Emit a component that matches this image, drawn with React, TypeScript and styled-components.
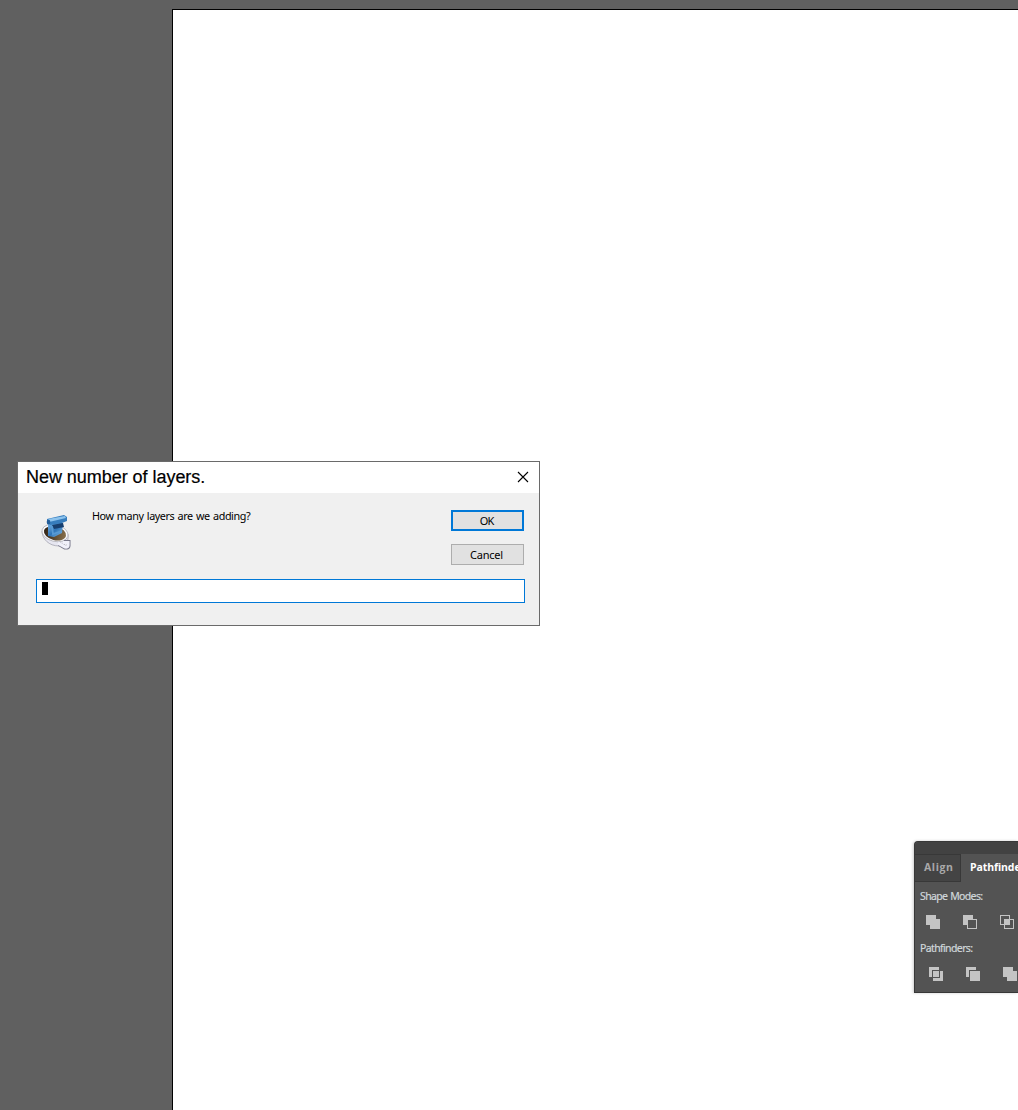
import React from "react";
import styled, { createGlobalStyle } from "styled-components";

const GlobalStyle = createGlobalStyle`
  body { margin: 0; overflow: hidden; background: #606060; }
  * { box-sizing: border-box; }
`;

const Workspace = styled.main`
  position: relative;
  display: flex;
  width: 100vw;
  height: 100vh;
  padding: 9px 0 0 172px;
  overflow: hidden;
  background: #606060;
`;

const Artboard = styled.section`
  flex: 1;
  border: solid #000;
  border-width: 1px 0 0 1px;
  background: #fff;
`;

const Dialog = styled.section`
  position: absolute;
  left: 17px;
  top: 461px;
  width: 523px;
  height: 165px;
  display: flex;
  flex-direction: column;
  border: 1px solid #6a6a6a;
  background: #f0f0f0;
  color: #000;
  font-family: "Noto Sans", sans-serif;
`;

const TitleBar = styled.header`
  display: flex;
  align-items: flex-start;
  justify-content: space-between;
  height: 31px;
  padding: 0 10px 0 8px;
  background: #fff;
`;

const Title = styled.h1`
  margin: 0;
  font: 400 18px/31px "Liberation Sans", sans-serif;
  letter-spacing: -0.04px;
  white-space: nowrap;
  -webkit-text-stroke: 0.2px #000;
`;

const CloseButton = styled.button`
  display: flex;
  margin-top: 9px;
  padding: 0;
  border: 0;
  background: none;
`;

const DialogBody = styled.div`
  display: flex;
  height: 86px;
  padding: 17px 15px 0 22px;
`;

const IconSlot = styled.div`
  width: 52px;
  padding-top: 4px;
`;

const Message = styled.p`
  flex: 1;
  margin: -2px 0 0;
  font-size: 10.8px;
  line-height: 15px;
  letter-spacing: -0.42px;
  word-spacing: 0.9px;
  white-space: nowrap;
`;

const Actions = styled.div`
  display: flex;
  flex-direction: column;
  gap: 13px;
`;

const DialogButton = styled.button<{ $primary?: boolean }>`
  display: flex;
  align-items: center;
  justify-content: center;
  width: 73px;
  height: 21px;
  padding: 0 2px 0 0;
  border: ${(p) => (p.$primary ? "2px solid #0078d7" : "1px solid #adadad")};
  background: #e1e1e1;
  color: #000;
  font: 400 11px/15px "Noto Sans", sans-serif;
  letter-spacing: ${(p) => (p.$primary ? "-0.9px" : "-0.2px")};
`;

const Field = styled.div`
  display: flex;
  width: 489px;
  height: 24px;
  margin-left: 18px;
  padding: 2px 5px;
  border: 1px solid #0078d7;
  background: #fff;
`;

const Selection = styled.span`
  width: 6px;
  height: 13px;
  background: #000;
`;

const Panel = styled.aside`
  position: absolute;
  left: 914px;
  top: 841px;
  width: 104px;
  height: 152px;
  overflow: hidden;
  display: flex;
  flex-direction: column;
  border: solid #383838;
  border-width: 1px 0 1px 1px;
  border-top-left-radius: 4px;
  background: #535353;
  box-shadow: -1px 0 3px rgba(0, 0, 0, 0.2);
  font-family: "Noto Sans", sans-serif;
`;

const PanelGrip = styled.div`
  height: 12px;
  border-top-left-radius: 3px;
  background: #424242;
`;

const Tabs = styled.div`
  display: flex;
  height: 28px;
`;

const Tab = styled.div<{ $active?: boolean }>`
  flex: none;
  width: ${(p) => (p.$active ? "80px" : "46px")};
  padding-left: 9px;
  border: solid #383838;
  border-width: ${(p) => (p.$active ? "0" : "1px 1px 1px 0")};
  padding-top: ${(p) => (p.$active ? "1px" : "0")};
  background: ${(p) => (p.$active ? "#535353" : "#444")};
  color: ${(p) => (p.$active ? "#fff" : "#a9a9a9")};
  font: 700 10.5px/24px "Open Sans", sans-serif;
  letter-spacing: ${(p) => (p.$active ? "-0.1px" : "0.6px")};
  white-space: nowrap;
`;

const Group = styled.section`
  height: 52px;
  padding: 7px 0 0 5px;
`;

const GroupLabel = styled.h2`
  margin: 0;
  color: #d0d7da;
  font-size: 10.5px;
  font-weight: 400;
  line-height: 15px;
  letter-spacing: -0.62px;
  word-spacing: 0.6px;
  -webkit-text-stroke: 0.2px #d0d7da;
`;

const Tools = styled.div<{ $inset: number }>`
  display: flex;
  gap: 23px;
  padding: 11px 0 0 ${(p) => p.$inset}px;
`;

const ToolIcon = styled.svg`
  flex: none;
  display: block;
  fill: #c4c4c4;
`;

const icons: Record<string, React.ReactNode> = {
  unite: <path d="M0 0h10v4h4v10H4v-4H0z" />,
  minusFront: <path fillRule="evenodd" d="M0 0h10v4H4v6H0zM4 4h10v10H4zM5 5v8h8V5z" />,
  intersect: <path fillRule="evenodd" d="M0 0h10v4h4v10H4v-4H0zM1 1v8h3V4h5V1zM10 5v5H5v3h8V5z" />,
  divide: <path fillRule="evenodd" d="M0 0h10v3H3v7H0zM4 4h6v6H4zM11 4h3v10H4v-3h7z" />,
  trim: <path d="M0 0h10v3H3v7H0zM4 4h10v10H4z" />,
  merge: <path d="M0 0h10v4h4v10H4v-4H0z" />,
};

const Pathfinder = ({ name }: { name: string }) => (
  <ToolIcon width="14" height="14" viewBox="0 0 14 14" shapeRendering="crispEdges">
    {icons[name]}
  </ToolIcon>
);

const ScriptIcon = () => (
  <svg width="34" height="36" viewBox="0 0 34 36">
    <defs>
      <linearGradient id="paper" x2="1" y2="1">
        <stop stopColor="#79b5e8" />
        <stop offset=".5" stopColor="#2f75b8" />
        <stop offset="1" stopColor="#85bee9" />
      </linearGradient>
      <linearGradient id="coffee">
        <stop stopColor="#302316" />
        <stop offset="1" stopColor="#88704c" />
      </linearGradient>
    </defs>
    <path d="M2 17c0 8 7 15 17 15 7 0 10-5 9-12z" fill="#e6e6f0" stroke="#9b9ba8" strokeWidth=".7" />
    <ellipse cx="15" cy="19" rx="13.3" ry="8.4" transform="rotate(14 15 19)" fill="#fafafd" stroke="#aaaab0" strokeWidth=".7" />
    <ellipse cx="15" cy="19.3" rx="11.3" ry="6.8" transform="rotate(14 15 19.3)" fill="url(#coffee)" />
    <path d="M19 30l6 3.5q3.5 .5 3.5-1.5v-4H24" fill="none" stroke="#77778a" strokeWidth="4" />
    <path d="M18 29l7 4q3 .5 3-1.5v-3H23" fill="none" stroke="#f0f0fa" strokeWidth="3.2" />
    <path d="M8 9h15l-1 10-8 4-6-1z" fill="url(#paper)" />
    <path d="M7 5l17-4 3 2v4l-5 2-12 2-3-3z" fill="#377dbd" />
    <path d="M8 5l17-3 1 2-17 4z" fill="#8dc3ed" />
    <path d="M12 11l11-2 1 4-10 2z" fill="#173f6f" />
    <path d="M9 12l3 1 1 7 9-3" stroke="#599bd4" fill="none" strokeWidth="1.8" />
    <ellipse cx="8.5" cy="8" rx="1.8" ry="2.6" fill="#245e9a" />
  </svg>
);

export default function App() {
  return (
    <>
      <GlobalStyle />
      <Workspace>
        <Artboard />
        <Dialog>
          <TitleBar>
            <Title>New number of layers.</Title>
            <CloseButton aria-label="Close">
              <svg width="12" height="12" viewBox="0 0 12 12">
                <path d="M1 1l10 10M11 1L1 11" stroke="#000" strokeWidth="1.1" />
              </svg>
            </CloseButton>
          </TitleBar>
          <DialogBody>
            <IconSlot><ScriptIcon /></IconSlot>
            <Message>How many layers are we adding?</Message>
            <Actions>
              <DialogButton $primary>OK</DialogButton>
              <DialogButton>Cancel</DialogButton>
            </Actions>
          </DialogBody>
          <Field><Selection /></Field>
        </Dialog>
        <Panel>
          <PanelGrip />
          <Tabs>
            <Tab>Align</Tab>
            <Tab $active>Pathfinder</Tab>
          </Tabs>
          <Group>
            <GroupLabel>Shape Modes:</GroupLabel>
            <Tools $inset={6}>
              <Pathfinder name="unite" />
              <Pathfinder name="minusFront" />
              <Pathfinder name="intersect" />
            </Tools>
          </Group>
          <Group>
            <GroupLabel>Pathfinders:</GroupLabel>
            <Tools $inset={9}>
              <Pathfinder name="divide" />
              <Pathfinder name="trim" />
              <Pathfinder name="merge" />
            </Tools>
          </Group>
        </Panel>
      </Workspace>
    </>
  );
}
